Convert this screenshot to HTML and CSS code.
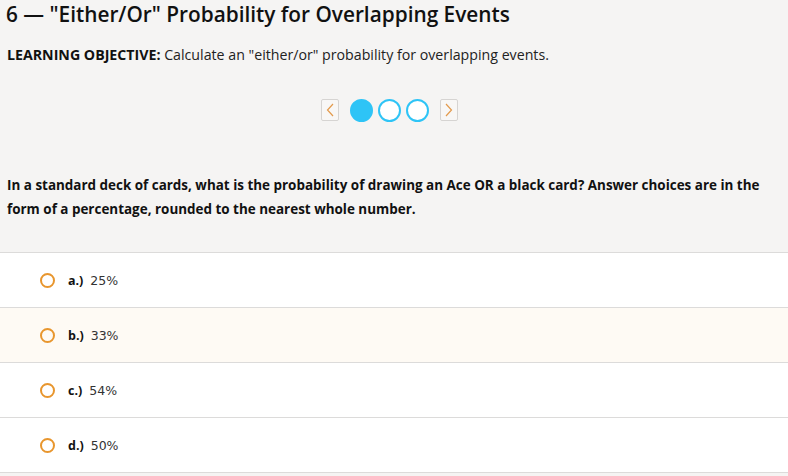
FILE: index.html
```html
<!DOCTYPE html>
<html>
<head>
<meta charset="utf-8">
<link rel="stylesheet" href="styles.css">
</head>
<body>
<div class="page">
  <section class="header">
    <h1 class="title">6 — "Either/Or" Probability for Overlapping Events</h1>
    <p class="objective"><strong>LEARNING OBJECTIVE:</strong> Calculate an "either/or" probability for overlapping events.</p>
    <div class="pager">
      <span class="arrow">
        <svg width="8" height="14" viewBox="0 0 8 14"><path d="M7 1 L1.5 7 L7 13" fill="none" stroke="#e39a4c" stroke-width="1.2"/></svg>
      </span>
      <span class="dot filled"></span>
      <span class="dot"></span>
      <span class="dot"></span>
      <span class="arrow">
        <svg width="8" height="14" viewBox="0 0 8 14"><path d="M1 1 L6.5 7 L1 13" fill="none" stroke="#e39a4c" stroke-width="1.2"/></svg>
      </span>
    </div>
    <p class="question">In a standard deck of cards, what is the probability of drawing an Ace OR a black card? Answer choices are in the form of a percentage, rounded to the nearest whole number.</p>
  </section>
  <ul class="choices">
    <li class="choice"><span class="radio"></span><span class="letter">a.)</span><span class="value">25%</span></li>
    <li class="choice hover"><span class="radio"></span><span class="letter">b.)</span><span class="value">33%</span></li>
    <li class="choice"><span class="radio"></span><span class="letter">c.)</span><span class="value">54%</span></li>
    <li class="choice"><span class="radio"></span><span class="letter">d.)</span><span class="value">50%</span></li>
  </ul>
</div>
</body>
</html>
```
FILE: styles.css
```css
html, body {
  margin: 0;
  padding: 0;
  background: #f5f4f3;
}
.page {
  font-family: "Open Sans", "Liberation Sans", sans-serif;
  color: #111;
  width: 788px;
}
.header {
  background: #f5f4f3;
  padding: 0 6px 31px 6px;
}
.title {
  margin: 0;
  font-size: 20.8px;
  line-height: 28px;
  font-weight: 600;
  color: #111;
}
.objective {
  margin: 17px 0 0 1px;
  font-size: 14.2px;
  line-height: 20px;
  color: #222;
}
.objective strong {
  font-weight: 700;
  color: #111;
}
.pager {
  margin-top: 33px;
  height: 24px;
  display: flex;
  justify-content: center;
  align-items: center;
  gap: 5px;
  padding-right: 10px;
}
.arrow {
  width: 16px;
  height: 20px;
  border: 1px solid #d6d4d2;
  border-radius: 2px;
  background: #f8f7f6;
  display: flex;
  align-items: center;
  justify-content: center;
  margin: 0 6px;
}
.dot {
  width: 19px;
  height: 19px;
  border-radius: 50%;
  border: 2px solid #2ec4f6;
  background: #fff;
}
.dot.filled {
  background: #2ec4f6;
}
.question {
  margin: 51px 0 0 1px;
  max-width: 775px;
  font-family: "Open Sans", "Liberation Sans", sans-serif;
  font-weight: 700;
  font-size: 13.45px;
  line-height: 24px;
  color: #111;
}
.choices {
  list-style: none;
  margin: 0;
  padding: 0;
  background: #fff;
  border-bottom: 1px solid #dcdbda;
}
.choice {
  height: 54px;
  border-top: 1px solid #dcdbda;
  display: flex;
  align-items: center;
  padding-left: 40px;
  background: #fff;
}
.choice.hover {
  background: #fefaf4;
}
.radio {
  width: 11px;
  height: 11px;
  border: 2px solid #e8962e;
  border-radius: 50%;
  margin-right: 13px;
}
.letter {
  font-family: "Open Sans", "Liberation Sans", sans-serif;
  font-weight: 700;
  font-size: 12.5px;
  color: #111;
  margin-right: 7px;
}
.value {
  font-family: "DejaVu Sans", sans-serif;
  font-size: 12.5px;
  color: #333;
}
```
